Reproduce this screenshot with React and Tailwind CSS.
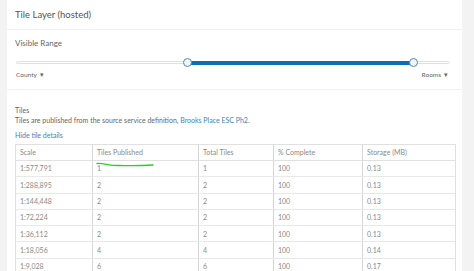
const rows = [
  ["1:577,791", "1", "1", "100", "0.13"],
  ["1:288,895", "2", "2", "100", "0.13"],
  ["1:144,448", "2", "2", "100", "0.13"],
  ["1:72,224", "2", "2", "100", "0.13"],
  ["1:36,112", "2", "2", "100", "0.13"],
  ["1:18,056", "4", "4", "100", "0.14"],
  ["1:9,028", "6", "6", "100", "0.17"],
];

const cols = ["w-[76px]", "w-[106px]", "w-[75px]", "w-[89px]", "w-[94px]"];

export default function App() {
  return (
    <div
      className="w-[474px] h-[271px] bg-[#f3f3f3] flex overflow-hidden text-[#595959]"
      style={{ fontFamily: "Lato, 'Open Sans', sans-serif" }}
    >
      <div className="ml-[7px] w-[455px] h-full bg-white flex flex-col">
        {/* Header */}
        <div className="h-[30px] shrink-0 border-b border-[#f0f0f0] flex items-center pl-[8px] pt-[2px]">
          <span className="text-[9.5px] text-[#555]">Tile Layer (hosted)</span>
        </div>

        {/* Visible range */}
        <div className="h-[60px] shrink-0 border-b border-[#f0f0f0] pl-[8px] pr-[12px]">
          <div className="text-[8px] mt-[7px] text-[#666]">Visible Range</div>
          <div className="relative h-[9px] mt-[9px] ml-[1px]">
            <div className="absolute left-0 right-0 top-[3px] h-[3px] border border-[#e0e0e0] rounded-full" />
            <div className="absolute left-[171px] w-[226px] top-[2.5px] h-[4px] bg-[#0a6fb5]" />
            <div className="absolute left-[167px] top-0 w-[9px] h-[9px] rounded-full bg-[#eef5fa] border border-[#5d86a8]" />
            <div className="absolute left-[393px] top-0 w-[9px] h-[9px] rounded-full bg-[#eef5fa] border border-[#5d86a8]" />
          </div>
          <div className="flex justify-between text-[6.5px] text-[#666] mt-[3px] ml-[1px] pr-[2px]">
            <span className="flex gap-[3px]">County <span>&#9662;</span></span>
            <span className="flex gap-[3px]">Rooms <span>&#9662;</span></span>
          </div>
        </div>

        {/* Tiles */}
        <div className="pl-[8px] pt-[15px]">
          <div className="text-[7px] leading-[10px] text-[#666]">Tiles</div>
          <div className="text-[7px] leading-[11px] text-[#666]">
            Tiles are published from the source service definition,{" "}
            <span className="text-[#3b85bd]">Brooks Place ESC Ph2</span>.
          </div>
          <div className="text-[7px] leading-[10px] mt-[4px] text-[#3b85bd]">Hide tile details</div>

          <div className="mt-[4px] w-[441px] border border-[#e0e0e0] text-[7px] text-[#8a8a8a]">
            <div className="flex h-[16px] border-b border-[#e0e0e0]">
              {["Scale", "Tiles Published", "Total Tiles", "% Complete", "Storage (MB)"].map((h, i) => (
                <div
                  key={h}
                  className={`${cols[i]} shrink-0 flex items-center pl-[4px] relative ${i > 0 ? "border-l border-[#d6d6d6]" : ""}`}
                >
                  {h}
                  {i === 1 && (
                    <svg className="absolute left-[3px] top-[17px] z-10" width="58" height="6" viewBox="0 0 58 6">
                      <path d="M1 1.5 C8 1, 12 3.5, 22 3.5 S 40 4, 57 3" stroke="#22d322" strokeWidth="1.3" fill="none" strokeLinecap="round" />
                    </svg>
                  )}
                </div>
              ))}
            </div>
            {rows.map((r) => (
              <div key={r[0]} className="flex h-[16.3px] border-b border-[#e8e8e8]">
                {r.map((c, i) => (
                  <div
                    key={i}
                    className={`${cols[i]} shrink-0 flex items-center pl-[4px] ${i > 0 ? "border-l border-[#d6d6d6]" : ""}`}
                  >
                    {c}
                  </div>
                ))}
              </div>
            ))}
          </div>
        </div>
      </div>
    </div>
  );
}
